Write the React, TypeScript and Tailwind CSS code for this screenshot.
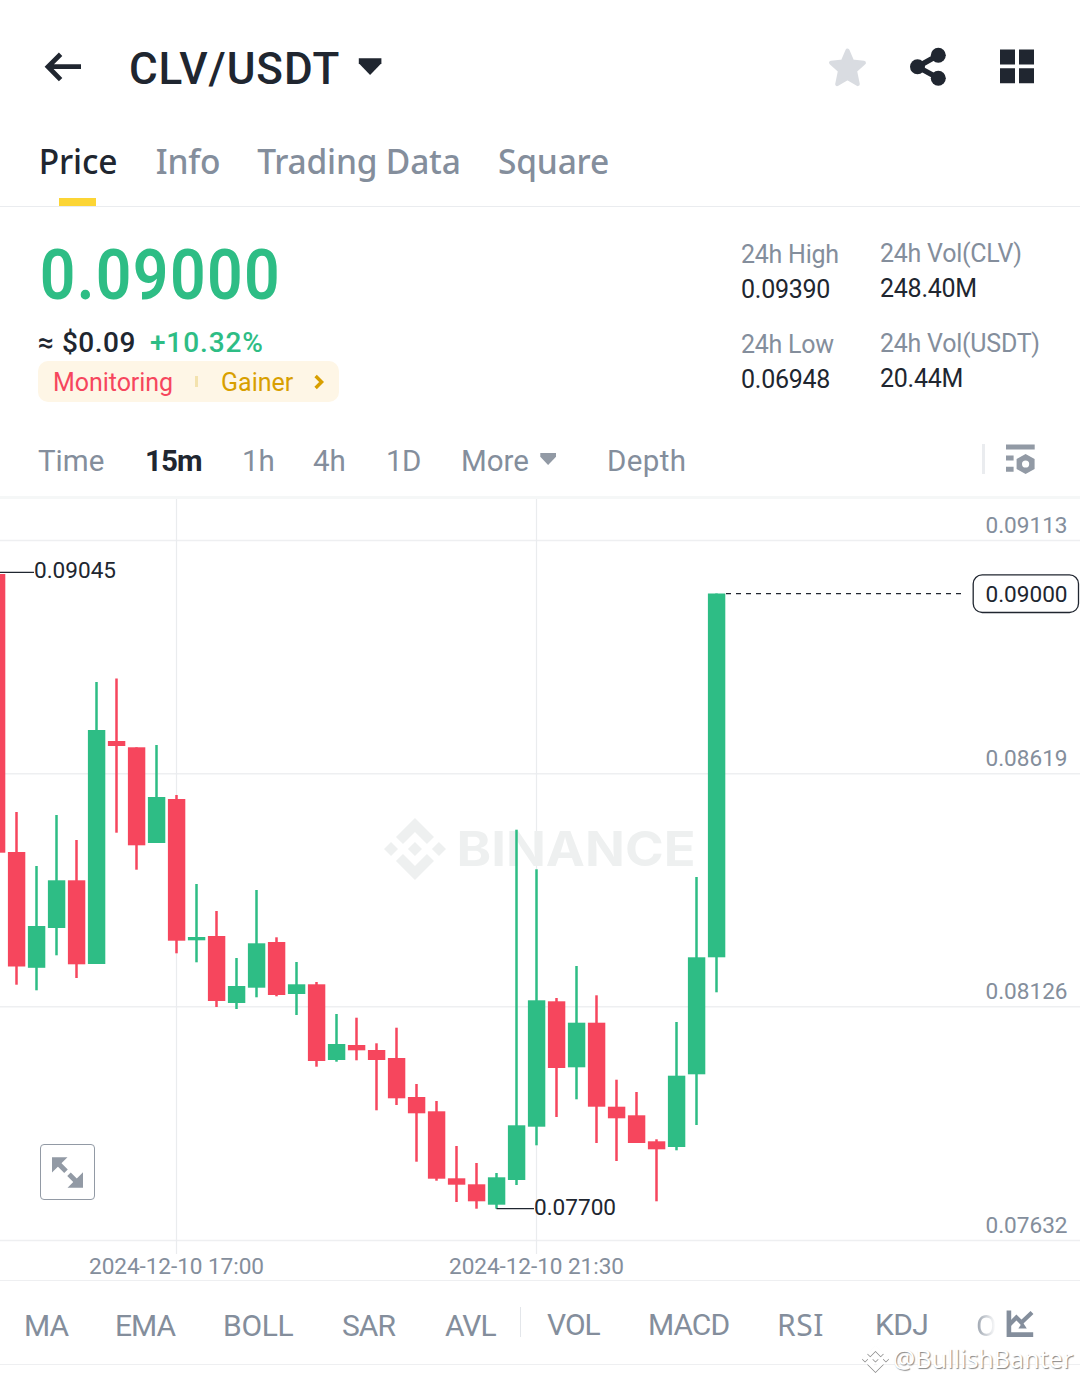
import { useState } from 'react';
import { SiBinance } from 'react-icons/si';

type Candle = {
  up: boolean;
  high: number;
  top: number;
  bottom: number;
  low: number;
};

const c = (up: 0 | 1, high: number, top: number, bottom: number, low: number): Candle => ({
  up: up === 1,
  high,
  top,
  bottom,
  low,
});

// One entry per 15 minutes, oldest first, in chart units
const candles: Candle[] = [
  c(0, 574, 574, 852.7, 852.7),
  c(0, 812, 852, 966.5, 984.7),
  c(1, 866, 926, 967.8, 990.3),
  c(1, 815, 880.3, 928, 955.3),
  c(0, 840, 880.3, 964.3, 978),
  c(1, 682, 730, 964, 964),
  c(0, 678.5, 741, 746, 832.7),
  c(0, 747.3, 747.3, 845.3, 869.7),
  c(1, 745, 797, 843, 843),
  c(0, 795, 799, 940.7, 953.3),
  c(1, 884, 937, 940.3, 962.3),
  c(0, 911, 936, 1001, 1007),
  c(1, 958, 986, 1003, 1009),
  c(1, 890, 943.3, 987.7, 997.3),
  c(0, 937.3, 942, 995, 996.3),
  c(1, 962, 984.3, 994, 1015),
  c(0, 982, 984.3, 1061, 1066.7),
  c(1, 1014, 1044, 1060, 1061.7),
  c(0, 1017.7, 1045, 1050.3, 1060.3),
  c(0, 1043.3, 1050, 1060, 1110.3),
  c(0, 1027.7, 1058, 1098.3, 1105),
  c(0, 1084, 1097, 1113.3, 1161.7),
  c(0, 1101, 1111.3, 1178.7, 1180.7),
  c(0, 1146, 1178.3, 1184.7, 1202),
  c(0, 1163, 1184.3, 1201.3, 1208.7),
  c(1, 1173, 1177.3, 1204.7, 1208.7),
  c(1, 829.7, 1125.3, 1180, 1185),
  c(1, 869.3, 1000.3, 1126.7, 1145.3),
  c(0, 998, 1001.3, 1068, 1117),
  c(1, 966, 1022.7, 1067.3, 1099.3),
  c(0, 995.3, 1022.7, 1106.7, 1143),
  c(0, 1079.7, 1106.7, 1118.3, 1161),
  c(0, 1092, 1115.3, 1143, 1143),
  c(0, 1139.3, 1141.3, 1149.3, 1201.3),
  c(1, 1022, 1075.7, 1147, 1150.3),
  c(1, 877, 957.3, 1074.3, 1125),
  c(1, 593.5, 593.5, 957.3, 992.3),
];

const priceLevels = [
  { y: 540.5, label: '0.09113' },
  { y: 773.7, label: '0.08619' },
  { y: 1006.8, label: '0.08126' },
  { y: 1240.5, label: '0.07632' },
];

const timeMarks = [
  { x: 176.5, label: '2024-12-10 17:00' },
  { x: 536.5, label: '2024-12-10 21:30' },
];

const tabs = [
  { name: 'Price', style: 'w-[79px]' },
  { name: 'Info', style: 'w-[65px]' },
  { name: 'Trading Data', style: 'w-[201px]' },
  { name: 'Square', style: 'w-[112px]' },
];

const intervals = [
  { name: 'Time', style: 'w-[107px]' },
  { name: '15m', style: 'w-[97px] tracking-[-0.9px]' },
  { name: '1h', style: 'w-[71px]' },
  { name: '4h', style: 'w-[73px]' },
  { name: '1D', style: 'w-[75px] tracking-[-0.5px]' },
];

const mainIndicators = [
  { name: 'MA', style: 'w-[91px]' },
  { name: 'EMA', style: 'w-[108px]' },
  { name: 'BOLL', style: 'w-[119px] tracking-[-0.3px]' },
  { name: 'SAR', style: 'w-[103px]' },
  { name: 'AVL', style: 'w-[75px]' },
];

const subIndicators = [
  { name: 'VOL', style: 'w-[101px]' },
  { name: 'MACD', style: 'w-[129px]' },
  { name: 'RSI', style: "w-[98px] font-['Noto_Sans',sans-serif] tracking-[0.5px]" },
  { name: 'KDJ', style: 'w-[101px] tracking-[-0.6px]' },
];

function Header() {
  return (
    <header className="flex h-[134px] items-center pl-11 pr-[45px] text-[#202630]">
      <svg className="h-[30px] w-[38px]" viewBox="44 52 38 30" fill="none" stroke="currentColor" strokeWidth="4.8">
        <path d="M48 66.7H81M60.6 54.2L48 66.7L60.6 79.6" />
      </svg>
      <h1 className="ml-[47px] pt-[3px] text-[44px] font-medium leading-none tracking-[0.9px]">CLV/USDT</h1>
      <svg className="ml-[18px] h-[18px] w-6" viewBox="358 57.5 24 18" fill="currentColor">
        <path d="M358.8 57.7H381.4V62.8L370.1 74.5L358.8 62.8Z" />
      </svg>
      <div className="ml-auto flex items-center">
        <svg className="h-[41px] w-[41px]" viewBox="0 0 40 40" fill="#d9dce1" stroke="#d9dce1" strokeWidth="4" strokeLinejoin="round">
          <path d="M20 3.5L24.6 14.2L36 15.3L27.3 23.2L30 36.2L20 30.3L10 36.2L12.7 23.2L4 15.3L15.4 14.2Z" />
        </svg>
        <svg className="ml-[41px] h-10 w-[38px]" viewBox="909 46.5 38 40" fill="currentColor">
          <path d="M938.3 54.7L917.5 66.3L938.3 77.7" fill="none" stroke="currentColor" strokeWidth="5.4" />
          <circle cx="917.5" cy="66.3" r="7.5" />
          <circle cx="938.3" cy="54.8" r="7.5" />
          <circle cx="938.3" cy="77.8" r="7.5" />
        </svg>
        <svg className="ml-[52px] h-9 w-9" viewBox="999 49 36 36" fill="currentColor">
          <path d="M1000 49.5h15v15h-15zM1019 49.5h15v15h-15zM1000 68.3h15v15h-15zM1019 68.3h15v15h-15z" />
        </svg>
      </div>
    </header>
  );
}

function Tabs() {
  const [active, setActive] = useState('Price');

  return (
    <nav className="flex h-[73px] gap-[38px] border-b border-[#eaecef] pl-[38px] font-['Noto_Sans',sans-serif] text-[33.5px] font-medium">
      {tabs.map((tab) => (
        <button
          key={tab.name}
          onClick={() => setActive(tab.name)}
          className={`flex flex-col items-center justify-between whitespace-nowrap ${tab.style} ${
            active === tab.name ? 'text-[#202630]' : 'text-[#848e9c]'
          }`}
        >
          <span className="pl-px leading-[54px] tracking-[-0.2px]">{tab.name}</span>
          {active === tab.name && <span className="h-2 w-[37px] bg-[#fcd535]" />}
        </button>
      ))}
    </nav>
  );
}

function Stat({ label, value }: { label: string; value: string }) {
  return (
    <div className="flex h-[90px] flex-col whitespace-nowrap text-[25px] leading-[35px]">
      <span className="tracking-[-0.25px] text-[#848e9c]">{label}</span>
      <span className="tracking-[-0.25px] text-[#202630]">{value}</span>
    </div>
  );
}

function Summary() {
  return (
    <section className="flex h-[219px] pl-[38px]">
      <div className="w-[703px] pt-8">
        <div className="h-[71px] origin-left scale-x-[0.88] pl-[2px] text-[71px] font-semibold leading-[71px] tracking-[1.5px] text-[#2ebd85]">
          0.09000
        </div>
        <div className="mt-[14px] flex h-[37px] items-center text-[28px] font-medium">
          <span className="tracking-[0.5px] text-[#202630]">≈ $0.09</span>
          <span className="ml-[14px] tracking-[0.9px] text-[#2ebd85]">+10.32%</span>
        </div>
        <div className="flex h-[41px] w-[301px] items-center rounded-[10px] bg-[#fef6e6] pl-[15px] text-[25px]">
          <span className="w-[119px] pt-0.5 tracking-[-0.05px] text-[#f6465d]">Monitoring</span>
          <span className="ml-[23px] h-[11px] w-[3px] bg-[#f3e2ae]" />
          <span className="ml-[23px] w-[73px] pt-0.5 text-[#d89f00]">Gainer</span>
          <svg className="ml-5 h-4 w-[11px]" viewBox="0 0 11 16" fill="none" stroke="#d89f00" strokeWidth="3.4">
            <path d="M1.6 2L7.6 8L1.6 14" />
          </svg>
        </div>
      </div>
      <div className="w-[139px] pt-[30px]">
        <Stat label="24h High" value="0.09390" />
        <Stat label="24h Low" value="0.06948" />
      </div>
      <div className="pt-[29px]">
        <Stat label="24h Vol(CLV)" value="248.40M" />
        <Stat label="24h Vol(USDT)" value="20.44M" />
      </div>
    </section>
  );
}

function IntervalBar() {
  const [interval, setInterval] = useState('15m');

  return (
    <div className="flex h-[73px] items-center border-b-[3px] border-[#f5f7f7] pl-[38px] pr-[45px] text-[29.5px] text-[#848e9c]">
      {intervals.map((item) => (
        <button
          key={item.name}
          onClick={() => setInterval(item.name)}
          className={`text-left ${item.style} ${item.name === interval ? 'font-bold text-[#202630]' : ''}`}
        >
          {item.name}
        </button>
      ))}
      <button className="flex w-[146px] items-center">
        More
        <svg className="mb-[5px] ml-[11px] h-3 w-4" viewBox="540 452 16 12" fill="#929aa5">
          <path d="M540.3 452H556V455.8L548.1 464L540.3 455.8Z" />
        </svg>
      </button>
      <button className="tracking-[0.4px]">Depth</button>
      <span className="mb-1 ml-auto h-[30px] w-[3px] bg-[#eaecef]" />
      <svg className="mb-1 ml-5 h-[30px] w-[30px]" viewBox="1005 444 30 30" fill="#929aa5">
        <path d="M1006 444.5h28.7v5h-28.7zM1006 455.5h7.6v5h-7.6zM1006 466.8h7.6v5h-7.6z" />
        <path fillRule="evenodd" d="M1025.6 454L1034.6 459V469L1025.6 474L1016.6 469V459ZM1025.6 460.4a3.6 3.6 0 1 0 0 7.2a3.6 3.6 0 0 0 0-7.2z" />
      </svg>
    </div>
  );
}

function Chart() {
  return (
    <section className="relative h-[781px]">
      <svg className="block h-full w-full" viewBox="0 499 1080 781">
        {priceLevels.map((level) => (
          <line key={level.label} x1="0" x2="1080" y1={level.y} y2={level.y} stroke="#eeeff1" strokeWidth="1.4" />
        ))}
        {timeMarks.map((mark) => (
          <line key={mark.label} x1={mark.x} x2={mark.x} y1="499" y2="1254" stroke="#eaecee" strokeWidth="1.2" />
        ))}

        {/* Brand mark behind the candles */}
        <g fill="#eef0f0">
          <SiBinance x="384" y="818" size={62} color="#eef0f0" />
          <text
            x="456.5"
            y="866.3"
            fontSize="47.5"
            fontWeight="700"
            textLength="239"
            lengthAdjust="spacingAndGlyphs"
            className="font-['Inter',sans-serif]"
          >
            BINANCE
          </text>
        </g>

        {candles.map((candle, i) => {
          const x = i * 20 - 3.5;
          return (
            <g key={i} fill={candle.up ? '#2ebd85' : '#f6465d'}>
              <rect x={x - 1.25} y={candle.high} width="2.5" height={candle.low - candle.high} />
              <rect x={x - 8.6} y={candle.top} width="17.4" height={candle.bottom - candle.top} />
            </g>
          );
        })}

        {/* High and low markers */}
        <g stroke="#202630" strokeWidth="1.3">
          <line x1="0" x2="34" y1="572.3" y2="572.3" />
          <line x1="496.5" x2="534" y1="1208.6" y2="1208.6" />
          <line x1="726" x2="961" y1="593.6" y2="593.6" strokeDasharray="5 5" />
        </g>
        <rect x="973.2" y="574.8" width="105.3" height="37.7" rx="9" fill="#fff" stroke="#202630" strokeWidth="1.3" />

        <g fontSize="22.6" fill="#202630">
          <text x="34" y="578.3" textLength="82">0.09045</text>
          <text x="534" y="1215.2" textLength="82">0.07700</text>
          <text x="985.5" y="602" textLength="82">0.09000</text>
        </g>
        <g fontSize="22.6" fill="#848e9c">
          {priceLevels.map((level) => (
            <text key={level.label} x="985.5" y={level.y - 7.4} textLength="82">{level.label}</text>
          ))}
          {timeMarks.map((mark) => (
            <text key={mark.label} x={mark.x - 87.5} y="1274.3" textLength="175">{mark.label}</text>
          ))}
        </g>
      </svg>

      <button className="absolute bottom-[80px] left-10 flex h-14 w-[55px] items-center justify-center rounded-[4px] border-[1.5px] border-[#929aa5] bg-white">
        <svg className="h-[31px] w-[31px]" viewBox="52 1156.5 31 31" fill="#929aa5" stroke="#929aa5">
          <path stroke="none" d="M52 1156.7H67.5L52 1172ZM83 1187.2V1171.7L67.5 1187.2Z" />
          <path strokeWidth="5" d="M57 1161.8L66 1170.8M69 1173.8L78 1182.8" />
        </svg>
      </button>
    </section>
  );
}

function IndicatorBar() {
  return (
    <div className="flex h-[85px] items-center border-y border-[#eeeff1] pl-6 pr-[46px] pt-[5px] text-[30px] tracking-[-1px] text-[#848e9c]">
      {mainIndicators.map((item) => (
        <button key={item.name} className={`text-left ${item.style}`}>
          {item.name}
        </button>
      ))}
      <span className="mb-[6px] h-[30px] w-px bg-[#e3e6ea]" />
      <div className="ml-[26px] flex items-center">
        {subIndicators.map((item) => (
          <button key={item.name} className={`text-left leading-[40px] ${item.style}`}>
            {item.name}
          </button>
        ))}
        <span className="w-5 bg-gradient-to-r from-[#9aa2ad] to-white bg-clip-text text-transparent">O</span>
      </div>
      <svg className="mb-[3px] ml-auto h-7 w-7 shrink-0" viewBox="1006 1309.5 28 28" fill="#848e9c">
        <path d="M1006.6 1310h4.6v21.8h22v4.7h-26.6z" />
        <path d="M1008.5 1325L1016.4 1317L1021.4 1322L1032 1312" fill="none" stroke="#848e9c" strokeWidth="4.2" />
        <path d="M1022.6 1321.5L1026.8 1328H1018.4Z" />
      </svg>
    </div>
  );
}

export default function App() {
  return (
    <div className="relative h-[1382px] w-[1080px] overflow-hidden bg-white font-['Roboto',sans-serif]">
      <Header />
      <Tabs />
      <Summary />
      <IntervalBar />
      <Chart />
      <IndicatorBar />

      <div className="absolute bottom-[7px] right-[7px] flex items-center gap-1 text-white">
        <SiBinance className="h-[27px] w-[27px] drop-shadow-[0_1px_0.6px_#888]" />
        <span className="font-['Noto_Sans',sans-serif] text-[25px] leading-[34px] [text-shadow:1px_1px_1px_#888]">
          @BullishBanter
        </span>
      </div>
    </div>
  );
}
